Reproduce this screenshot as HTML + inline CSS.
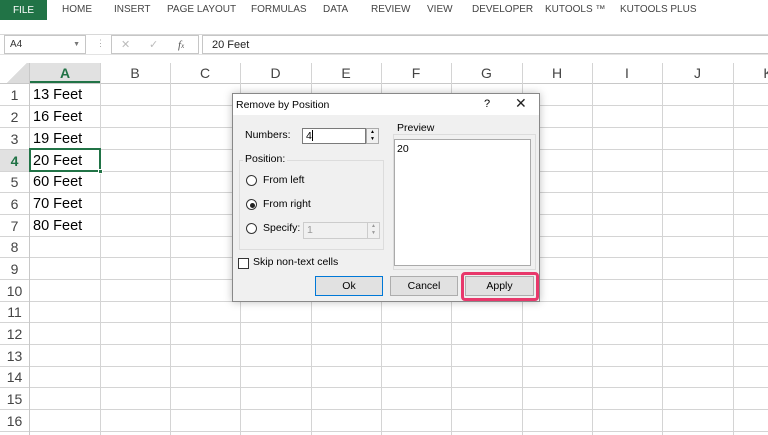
<!DOCTYPE html>
<html><head><style>
*{margin:0;padding:0;box-sizing:border-box}
body{width:768px;height:435px;overflow:hidden;background:#fff;font-family:"Liberation Sans",sans-serif;position:relative}
.a{position:absolute}
.tab{position:absolute;top:4px;font-size:10px;color:#444}
.hl{position:absolute;left:0;width:768px;height:1px;background:#d4d4d4}
.vl{position:absolute;top:63px;width:1px;height:372px;background:#d4d4d4}
.ch{position:absolute;top:63px;height:20px;font-size:14px;color:#444;text-align:center;line-height:21px}
.rn{position:absolute;left:0;width:29px;font-size:14px;color:#444;text-align:center;height:21px;line-height:22px}
.cell{position:absolute;left:33px;font-size:14.5px;color:#000;line-height:22px}
.d{font-size:10.5px;color:#000}
.radio{position:absolute;width:11px;height:11px;border:1px solid #333;border-radius:50%;background:#fff}
.btn{position:absolute;height:20px;border:1px solid #adadad;background:#e1e1e1;font-size:10.5px;text-align:center;line-height:18px}
</style></head><body>
<div class="a" style="left:0;top:0;width:47px;height:20px;background:#217346;color:#fff;font-size:10px;text-align:center;line-height:21px">FILE</div>
<div class="tab" style="left:62px">HOME</div>
<div class="tab" style="left:114px">INSERT</div>
<div class="tab" style="left:167px">PAGE LAYOUT</div>
<div class="tab" style="left:251px">FORMULAS</div>
<div class="tab" style="left:323px">DATA</div>
<div class="tab" style="left:371px">REVIEW</div>
<div class="tab" style="left:427px">VIEW</div>
<div class="tab" style="left:472px">DEVELOPER</div>
<div class="tab" style="left:545px">KUTOOLS ™</div>
<div class="tab" style="left:620px">KUTOOLS PLUS</div>
<div class="hl" style="top:34px;background:#d8d8d8"></div>
<div class="a" style="left:4px;top:35px;width:82px;height:19px;border:1px solid #c6c6c6;font-size:10px;line-height:18px;padding-left:5px;color:#333">A4<span style="position:absolute;right:5px;top:0;font-size:7px;color:#777">▼</span></div>
<div class="a" style="left:96px;top:38px;font-size:9px;color:#aaa">⋮</div>
<div class="a" style="left:111px;top:35px;width:88px;height:19px;border:1px solid #c6c6c6;font-size:11px;color:#bbb;line-height:18px"><span style="position:absolute;left:9px">✕</span><span style="position:absolute;left:37px">✓</span><span style="position:absolute;left:66px;color:#555;font-family:'Liberation Serif';font-style:italic;font-size:11px">f<small style="font-size:7px">x</small></span></div>
<div class="a" style="left:202px;top:35px;width:566px;height:19px;border:1px solid #c6c6c6;border-right:none;font-size:11px;line-height:18px;padding-left:9px;color:#222">20 Feet</div>
<div class="hl" style="top:54px;background:#e3e3e3"></div>
<div class="a" style="left:0;top:63px;width:768px;height:20px;background:#fff"></div>
<div class="a" style="left:30px;top:63px;width:70px;height:20px;background:#e1e1e1;border-bottom:2px solid #217346"></div>
<div class="a" style="left:0;top:63px;width:29px;height:20px;background:linear-gradient(135deg,#fff 55%,#dcdcdc 55%)"></div>
<div class="a" style="left:0;top:149px;width:29px;height:22px;background:#e1e1e1"></div>
<div class="hl" style="top:83px;background:#c8c8c8"></div>
<div class="hl" style="top:105px"></div><div class="hl" style="top:127px"></div><div class="hl" style="top:149px"></div><div class="hl" style="top:171px"></div><div class="hl" style="top:192px"></div><div class="hl" style="top:214px"></div><div class="hl" style="top:236px"></div><div class="hl" style="top:257px"></div><div class="hl" style="top:279px"></div><div class="hl" style="top:301px"></div><div class="hl" style="top:322px"></div><div class="hl" style="top:344px"></div><div class="hl" style="top:366px"></div><div class="hl" style="top:387px"></div><div class="hl" style="top:409px"></div><div class="hl" style="top:431px"></div>
<div class="vl" style="left:29px;background:#c8c8c8"></div><div class="vl" style="left:100px"></div><div class="vl" style="left:170px"></div><div class="vl" style="left:240px"></div><div class="vl" style="left:311px"></div><div class="vl" style="left:381px"></div><div class="vl" style="left:451px"></div><div class="vl" style="left:522px"></div><div class="vl" style="left:592px"></div><div class="vl" style="left:662px"></div><div class="vl" style="left:733px"></div>
<div class="ch" style="left:30px;width:70px;color:#217346;font-weight:bold">A</div>
<div class="ch" style="left:100px;width:70px">B</div><div class="ch" style="left:170px;width:70px">C</div><div class="ch" style="left:240px;width:71px">D</div><div class="ch" style="left:311px;width:70px">E</div><div class="ch" style="left:381px;width:70px">F</div><div class="ch" style="left:451px;width:71px">G</div><div class="ch" style="left:522px;width:70px">H</div><div class="ch" style="left:592px;width:70px">I</div><div class="ch" style="left:662px;width:71px">J</div><div class="ch" style="left:733px;width:70px">K</div>
<div class="rn" style="top:84px">1</div><div class="rn" style="top:106px">2</div><div class="rn" style="top:128px">3</div><div class="rn" style="top:150px;color:#217346;font-weight:bold">4</div><div class="rn" style="top:171px">5</div><div class="rn" style="top:193px">6</div><div class="rn" style="top:215px">7</div><div class="rn" style="top:236px">8</div><div class="rn" style="top:258px">9</div><div class="rn" style="top:280px">10</div><div class="rn" style="top:301px">11</div><div class="rn" style="top:323px">12</div><div class="rn" style="top:345px">13</div><div class="rn" style="top:366px">14</div><div class="rn" style="top:388px">15</div><div class="rn" style="top:410px">16</div>
<div class="cell" style="top:84px">13 Feet</div><div class="cell" style="top:106px">16 Feet</div><div class="cell" style="top:128px">19 Feet</div><div class="cell" style="top:150px">20 Feet</div><div class="cell" style="top:171px">60 Feet</div><div class="cell" style="top:193px">70 Feet</div><div class="cell" style="top:215px">80 Feet</div>
<div class="a" style="left:29px;top:148px;width:72px;height:24px;border:2px solid #217346"></div>
<div class="a" style="left:98px;top:169px;width:5px;height:5px;background:#217346;border:1px solid #fff"></div>

<div class="a d" style="left:232px;top:93px;width:308px;height:209px;background:#f0f0f0;border:1px solid #888;box-shadow:0 0 8px rgba(0,0,0,.25)">
 <div class="a" style="left:0;top:0;width:306px;height:21px;background:#fff"></div>
 <div class="a" style="left:3px;top:5px">Remove by Position</div>
 <div class="a" style="left:251px;top:4px;font-size:11px">?</div>
 <div class="a" style="left:282px;top:2px;font-size:14px;color:#222;font-family:'DejaVu Sans'">✕</div>
 <div class="a" style="left:12px;top:35px">Numbers:</div>
 <div class="a" style="left:69px;top:34px;width:64px;height:16px;background:#fff;border:1px solid #7a7a7a;padding-left:3px;line-height:14px">4<span style="display:inline-block;width:1px;height:11px;background:#000;vertical-align:-2px"></span></div>
 <div class="a" style="left:133px;top:34px;width:13px;height:16px;background:#f0f0f0;border:1px solid #aaa;font-size:5px;text-align:center;line-height:7px">▲<br>▼</div>
 <div class="a" style="left:6px;top:66px;width:145px;height:90px;border:1px solid #dcdcdc"></div>
 <div class="a" style="left:10px;top:59px;background:#f0f0f0;padding:0 2px">Position:</div>
 <div class="radio" style="left:13px;top:81px"></div><div class="a" style="left:30px;top:80px">From left</div>
 <div class="radio" style="left:13px;top:105px"></div><div class="a" style="left:17px;top:109px;width:5px;height:5px;border-radius:50%;background:#222"></div><div class="a" style="left:30px;top:104px">From right</div>
 <div class="radio" style="left:13px;top:129px"></div><div class="a" style="left:30px;top:128px">Specify:</div>
 <div class="a" style="left:70px;top:128px;width:77px;height:17px;background:#f0f0f0;border:1px solid #ccc;color:#999;padding-left:3px;line-height:15px">1<span style="position:absolute;right:0;top:0;width:12px;height:15px;border-left:1px solid #ccc;font-size:5px;text-align:center;line-height:7px">▲<br>▼</span></div>
 <div class="a" style="left:160px;top:40px;width:143px;height:136px;border:1px solid #dcdcdc"></div>
 <div class="a" style="left:162px;top:28px;background:#f0f0f0;padding:0 2px">Preview</div>
 <div class="a" style="left:161px;top:45px;width:137px;height:127px;background:#fff;border:1px solid #aaa;padding:3px 2px">20</div>
 <div class="a" style="left:5px;top:164px;width:11px;height:11px;background:#fff;border:1px solid #333"></div>
 <div class="a" style="left:20px;top:162px">Skip non-text cells</div>
 <div class="btn" style="left:82px;top:182px;width:68px;border:1px solid #0078d7">Ok</div>
 <div class="btn" style="left:157px;top:182px;width:68px">Cancel</div>
 <div class="btn" style="left:232px;top:182px;width:69px">Apply</div>
 <div class="a" style="left:228px;top:178px;width:78px;height:29px;border:3px solid #e8386b;border-radius:4px"></div>
</div>
</body></html>
